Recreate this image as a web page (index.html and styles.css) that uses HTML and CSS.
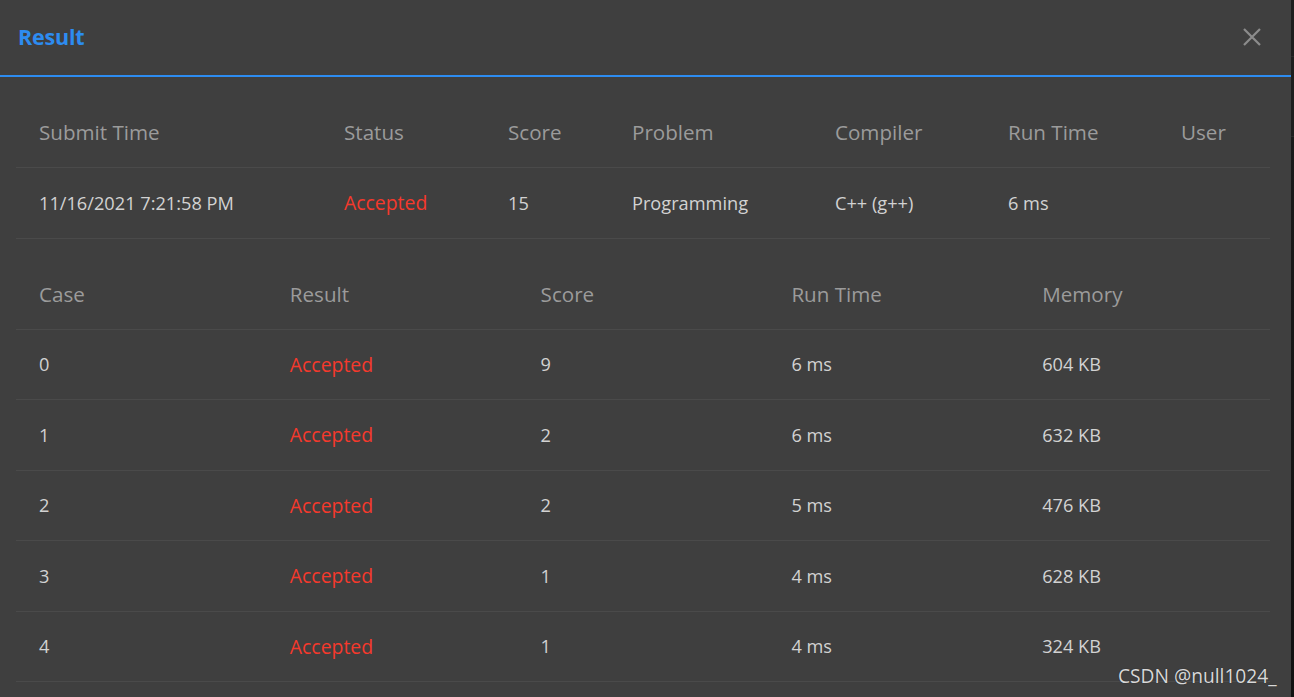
FILE: index.html
```html
<!DOCTYPE html>
<html lang="en">
<head>
<meta charset="utf-8">
<title>Result</title>
<link rel="stylesheet" href="styles.css">
</head>
<body>
<div class="page">
  <div class="modal">
    <div class="modal-header">
      <div class="modal-title">Result</div>
      <button class="modal-close" aria-label="Close">
        <svg width="20" height="20" viewBox="0 0 20 20"><path d="M2 2 L18 18 M18 2 L2 18" stroke="#8c8c8c" stroke-width="2.2" fill="none"/></svg>
      </button>
    </div>
    <div class="modal-body">
      <table class="grid summary">
        <colgroup>
          <col class="c-time"><col class="c-status"><col class="c-score"><col class="c-problem"><col class="c-compiler"><col class="c-run"><col class="c-user">
        </colgroup>
        <thead>
          <tr><th>Submit Time</th><th>Status</th><th>Score</th><th>Problem</th><th>Compiler</th><th>Run Time</th><th>User</th></tr>
        </thead>
        <tbody>
          <tr><td>11/16/2021 7:21:58 PM</td><td class="ok">Accepted</td><td>15</td><td>Programming</td><td>C++ (g++)</td><td>6 ms</td><td></td></tr>
        </tbody>
      </table>
      <table class="grid cases">
        <thead>
          <tr><th>Case</th><th>Result</th><th>Score</th><th>Run Time</th><th>Memory</th></tr>
        </thead>
        <tbody>
          <tr><td>0</td><td class="ok">Accepted</td><td>9</td><td>6 ms</td><td>604 KB</td></tr>
          <tr><td>1</td><td class="ok">Accepted</td><td>2</td><td>6 ms</td><td>632 KB</td></tr>
          <tr><td>2</td><td class="ok">Accepted</td><td>2</td><td>5 ms</td><td>476 KB</td></tr>
          <tr><td>3</td><td class="ok">Accepted</td><td>1</td><td>4 ms</td><td>628 KB</td></tr>
          <tr><td>4</td><td class="ok">Accepted</td><td>1</td><td>4 ms</td><td>324 KB</td></tr>
        </tbody>
      </table>
    </div>
    <div class="watermark">CSDN @null1024_</div>
  </div>
  <div class="backdrop"></div>
</div>
</body>
</html>
```
FILE: styles.css
```css
* { box-sizing: border-box; }
html, body { margin: 0; padding: 0; }
body {
  background: #161616;
  font-family: "Open Sans", "Noto Sans", sans-serif;
  overflow: hidden;
}
.page {
  display: flex;
  width: 1294px;
  height: 697px;
}
.modal {
  position: relative;
  width: 1291px;
  height: 697px;
  background: #3f3f3f;
  flex: none;
}
.backdrop {
  flex: 1;
  background: linear-gradient(#1e1e1e 0, #1e1e1e 56px, #2a2a2a 56px, #2a2a2a 57px, #1e1e1e 57px, #1e1e1e 136px, #2a2a2a 136px, #2a2a2a 137px, #1a1a1a 137px, #111 697px);
}
.modal-header {
  height: 77px;
  border-bottom: 2px solid #2d8cf0;
  display: flex;
  align-items: center;
  justify-content: space-between;
  padding: 0 29px 2px 18px;
}
.modal-title {
  color: #2d8cf0;
  font-size: 21.5px;
  font-weight: 700;
  letter-spacing: -0.2px;
}
.modal-close {
  background: none;
  border: 0;
  padding: 0;
  width: 20px;
  height: 20px;
  display: flex;
  cursor: pointer;
}
.modal-body {
  padding: 20px 21px 0 16px;
}
.grid {
  width: 1254px;
  border-collapse: collapse;
  table-layout: fixed;
}
.grid th, .grid td {
  text-align: left;
  padding: 0 0 0 23px;
  height: 70.5px;
  border-bottom: 1px solid #4a4a4a;
  white-space: nowrap;
  vertical-align: middle;
}
.grid th {
  color: #9b9b9b;
  font-weight: 400;
  font-size: 20.6px;
}
.grid td {
  color: #d2d2d2;
  font-size: 18.2px;
}
.grid td.ok {
  color: #f5392c;
  font-size: 19.4px;
}
.summary { margin-bottom: 20px; }
.c-time { width: 305px; }
.c-status { width: 164px; }
.c-score { width: 124px; }
.c-problem { width: 203px; }
.c-compiler { width: 173px; }
.c-run { width: 173px; }
.c-user { width: 112px; }
.watermark {
  position: absolute;
  left: 1118px;
  top: 662px;
  color: #d8d8d8;
  font-size: 19.2px;
  text-shadow: 0 0 1px #222;
}
```
